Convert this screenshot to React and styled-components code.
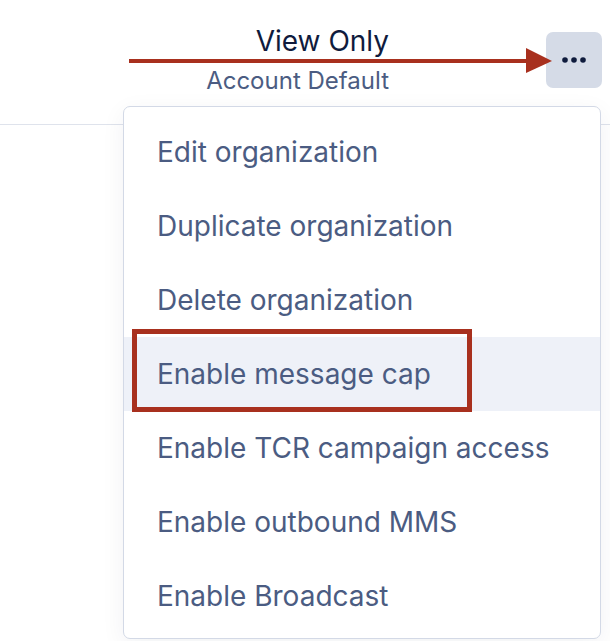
import React from 'react';
import styled, { createGlobalStyle } from 'styled-components';

const GlobalStyle = createGlobalStyle`
  html, body {
    margin: 0;
    padding: 0;
    background: #ffffff;
  }
  body {
    font-family: Inter, "Noto Sans", "Liberation Sans", sans-serif;
    -webkit-font-smoothing: antialiased;
  }
  * { box-sizing: border-box; }
`;

const Page = styled.div`
  position: relative;
  width: 610px;
  height: 641px;
  overflow: hidden;
`;

const Header = styled.header`
  display: flex;
  justify-content: flex-end;
  align-items: flex-start;
  height: 125px;
  padding: 25px 8px 0 0;
  border-bottom: 1px solid #dfe3ec;
`;

const AccessInfo = styled.div`
  display: flex;
  flex-direction: column;
  align-items: flex-end;
  gap: 9px;
  margin-right: 157px;
`;

const AccessLevel = styled.div`
  font-size: 28px;
  line-height: 32px;
  color: #0f1b3d;
`;

const AccessSource = styled.div`
  font-size: 24px;
  line-height: 30px;
  color: #4b5c82;
`;

const MoreButton = styled.button`
  display: flex;
  align-items: center;
  justify-content: center;
  width: 56px;
  height: 56px;
  margin-top: 7px;
  padding: 0;
  border: none;
  border-radius: 7px;
  background: #d5dbe7;
  cursor: pointer;
`;

const Menu = styled.ul`
  position: absolute;
  top: 106px;
  right: 9px;
  width: 478px;
  margin: 0;
  padding: 8px 0 5px;
  list-style: none;
  background: #ffffff;
  border: 1px solid #d3d9e6;
  border-radius: 7px;
  box-shadow: 0 6px 24px rgba(15, 27, 61, 0.06);
`;

const MenuItem = styled.li`
  display: flex;
  align-items: center;
  height: 74px;
  padding-left: 33px;
  font-size: 28px;
  color: #4b5c82;
  background: ${p => (p.$active ? '#eef1f8' : 'transparent')};
  cursor: pointer;
`;

const Arrow = styled.svg`
  position: absolute;
  left: 129px;
  top: 48px;
`;

const Highlight = styled.div`
  position: absolute;
  left: 132px;
  top: 329px;
  width: 340px;
  height: 83px;
  border: 5px solid #a8301e;
  pointer-events: none;
`;

const items = [
  'Edit organization',
  'Duplicate organization',
  'Delete organization',
  'Enable message cap',
  'Enable TCR campaign access',
  'Enable outbound MMS',
  'Enable Broadcast',
];

export default function App() {
  return (
    <Page>
      <GlobalStyle />
      <Header>
        <AccessInfo>
          <AccessLevel>View Only</AccessLevel>
          <AccessSource>Account Default</AccessSource>
        </AccessInfo>
        <MoreButton aria-label="More actions">
          <svg width="28" height="8" viewBox="0 0 28 8">
            <circle cx="5" cy="4" r="2.8" fill="#0f1b3d" />
            <circle cx="14" cy="4" r="2.8" fill="#0f1b3d" />
            <circle cx="23" cy="4" r="2.8" fill="#0f1b3d" />
          </svg>
        </MoreButton>
      </Header>
      <Menu>
        {items.map((label, i) => (
          <MenuItem key={label} $active={i === 3}>
            {label}
          </MenuItem>
        ))}
      </Menu>
      <Arrow width="424" height="26" viewBox="0 0 424 26">
        <rect x="0" y="11" width="400" height="4" fill="#a8301e" />
        <polygon points="397,0 423,13 397,25" fill="#a8301e" />
      </Arrow>
      <Highlight />
    </Page>
  );
}
